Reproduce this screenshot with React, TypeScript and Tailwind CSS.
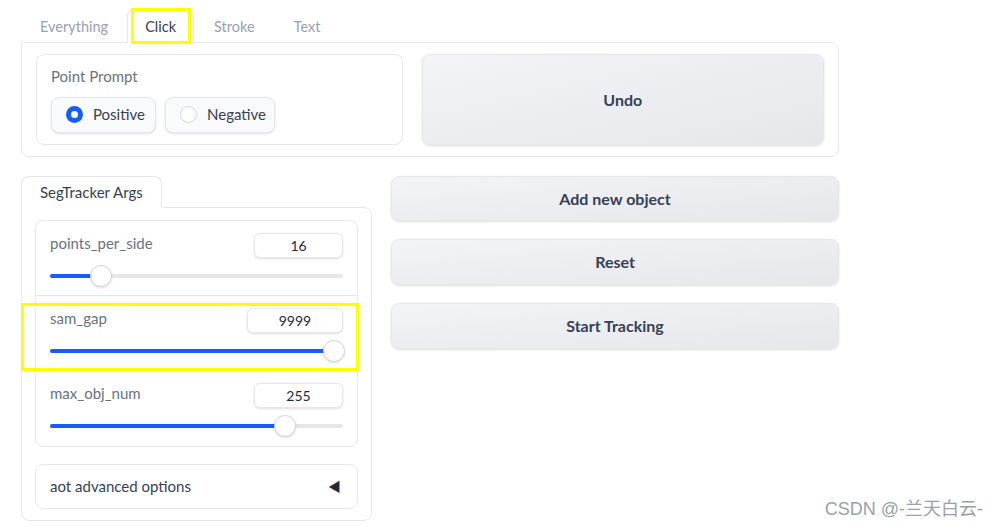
const font = { fontFamily: "Lato, 'Noto Sans CJK SC', sans-serif" };

function SliderRow({ label, value, boxW, thumb }: { label: string; value: string; boxW: string; thumb: number }) {
  return (
    <div className="flex h-[75px] flex-col px-[14px] pt-[12px]">
      <div className="flex items-start justify-between">
        <span className="text-[15px] leading-[20px] text-gray-500">{label}</span>
        <div className={`flex h-[25px] items-center justify-center rounded-md border border-gray-200 bg-white text-[14px] text-gray-800 shadow-sm ${boxW}`}>
          {value}
        </div>
      </div>
      <div className="relative mt-[16px] h-[4px] rounded-full bg-gray-200">
        <div className="absolute left-0 top-0 h-[4px] rounded-full bg-blue-600" style={{ width: thumb }} />
        <div
          className="absolute top-[-9px] h-[22px] w-[22px] rounded-full border border-gray-300 bg-white shadow-sm"
          style={{ left: thumb - 11 }}
        />
      </div>
    </div>
  );
}

function GrayButton({ label, className }: { label: string; className: string }) {
  return (
    <button
      type="button"
      className={`flex items-center justify-center rounded-lg border border-gray-200 bg-gradient-to-br from-gray-100 to-gray-200 text-[16px] font-bold text-gray-700 shadow-sm ${className}`}
    >
      {label}
    </button>
  );
}

export default function App() {
  return (
    <div className="relative h-[527px] w-[997px] overflow-hidden bg-white" style={font}>
      <div className="ml-[21px] w-[818px] pt-[8px]">
        {/* top tabs */}
        <div className="flex h-[34px] items-end text-[14.5px]">
          <div className="flex h-[34px] items-center px-[19px] pt-[3px] text-gray-400">Everything</div>
          <div className="relative -mb-px flex h-[35px] items-center rounded-t-lg border border-b-white border-gray-200 bg-white px-[17px] pt-[3px] text-gray-700">
            Click
          </div>
          <div className="flex h-[34px] items-center px-[20px] pt-[3px] text-gray-400">Stroke</div>
          <div className="flex h-[34px] items-center px-[19px] pt-[3px] text-gray-400">Text</div>
        </div>
        <div className="flex gap-[19px] rounded-b-lg rounded-tr-lg border border-gray-200 px-[14px] pb-[11px] pt-[11px]">
          <div className="flex h-[91px] w-[367px] flex-col rounded-lg border border-gray-200 px-[14px] pt-[10px]">
            <span className="text-[15px] text-gray-500">Point Prompt</span>
            <div className="mt-[9px] flex gap-[9px]">
              <div className="flex h-[36px] w-[105px] items-center gap-[10px] rounded-lg border border-gray-200 bg-gray-50 px-[14px] text-[15px] text-gray-700 shadow-sm">
                <span className="flex h-[17px] w-[17px] shrink-0 items-center justify-center rounded-full bg-blue-600">
                  <span className="h-[7px] w-[7px] rounded-full bg-white" />
                </span>
                Positive
              </div>
              <div className="flex h-[36px] w-[110px] items-center gap-[10px] rounded-lg border border-gray-200 bg-gray-50 px-[14px] text-[15px] text-gray-700 shadow-sm">
                <span className="h-[17px] w-[17px] shrink-0 rounded-full border border-gray-300 bg-white" />
                Negative
              </div>
            </div>
          </div>
          <GrayButton label="Undo" className="h-[91px] w-[403px]" />
        </div>

        {/* lower section */}
        <div className="mt-[19px] flex gap-[19px]">
          <div className="w-[351px]">
            <div className="flex">
              <div className="relative -mb-px flex h-[32px] items-center rounded-t-lg border border-b-white border-gray-200 bg-white px-[18px] text-[15px] text-gray-700">
                SegTracker Args
              </div>
            </div>
            <div className="rounded-b-lg rounded-tr-lg border border-gray-200 px-[13px] pb-[11px] pt-[12px]">
              <div className="flex flex-col divide-y divide-gray-200 rounded-lg border border-gray-200">
                <SliderRow label="points_per_side" value="16" boxW="w-[89px]" thumb={51} />
                <SliderRow label="sam_gap" value="9999" boxW="w-[96px]" thumb={284} />
                <SliderRow label="max_obj_num" value="255" boxW="w-[89px]" thumb={235} />
              </div>
              <div className="mt-[17px] flex h-[45px] items-center justify-between rounded-lg border border-gray-200 px-[14px] text-[15px] text-gray-700">
                aot advanced options
                <span className="mr-[2px] text-[13px] text-gray-800">◀</span>
              </div>
            </div>
          </div>
          <div className="flex w-[448px] flex-col gap-[18px]">
            <GrayButton label="Add new object" className="h-[45px] w-full" />
            <GrayButton label="Reset" className="h-[46px] w-full" />
            <GrayButton label="Start Tracking" className="h-[46px] w-full" />
          </div>
        </div>
      </div>

      {/* annotation boxes */}
      <div className="pointer-events-none absolute left-[131px] top-[8px] h-[36px] w-[60px] border-[3px] border-[#ffff00]" />
      <div className="pointer-events-none absolute left-[21px] top-[303px] h-[68px] w-[338px] border-[3px] border-[#ffff00]" />

      <div
        className="absolute bottom-[7px] right-[14px] text-[18px] leading-[22px] text-gray-400"
        style={{ fontFamily: "'Liberation Sans', 'Noto Sans CJK SC', sans-serif" }}
      >
        CSDN @-兰天白云-
      </div>
    </div>
  );
}
